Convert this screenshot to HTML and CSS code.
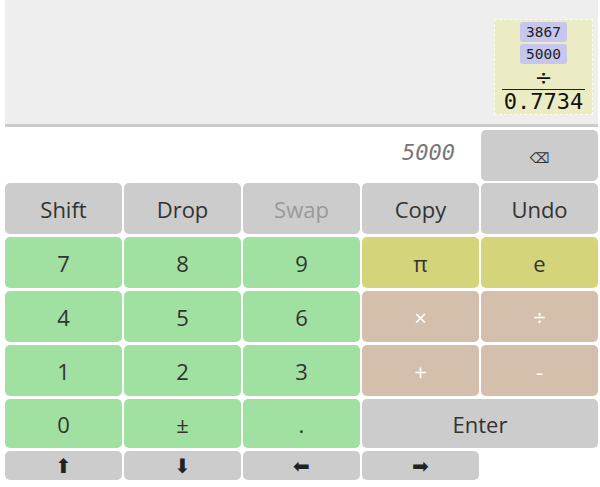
FILE: index.html
```html
<!DOCTYPE html>
<html lang="en">
<head>
    <meta charset="UTF-8">
    <meta name="viewport" content="width=device-width, initial-scale=1.0">
    <title>RPN Calculator</title>
    <link rel="stylesheet" href="styles.css">
</head>
<body>

    <!-- Stack -->
    <div class="stack-area">
        <div class="stack">
            <div class="chip">3867</div>
            <div class="chip">5000</div>
            <div class="op">÷</div>
            <div class="result">0.7734</div>
        </div>
    </div>

    <!-- Entry -->
    <div class="entry">
        <div class="display">5000</div>
        <button class="key gray bksp">⌫</button>
    </div>

    <!-- Keypad -->
    <div class="keys">
        <button class="key gray">Shift</button>
        <button class="key gray">Drop</button>
        <button class="key gray off">Swap</button>
        <button class="key gray">Copy</button>
        <button class="key gray">Undo</button>

        <button class="key num">7</button>
        <button class="key num">8</button>
        <button class="key num">9</button>
        <button class="key const">π</button>
        <button class="key const">e</button>

        <button class="key num">4</button>
        <button class="key num">5</button>
        <button class="key num">6</button>
        <button class="key oper">×</button>
        <button class="key oper">÷</button>

        <button class="key num">1</button>
        <button class="key num">2</button>
        <button class="key num">3</button>
        <button class="key oper">+</button>
        <button class="key oper">-</button>

        <button class="key num">0</button>
        <button class="key num">±</button>
        <button class="key num">.</button>
        <button class="key gray enter">Enter</button>

        <button class="key gray arrow">⬆</button>
        <button class="key gray arrow">⬇</button>
        <button class="key gray arrow">⬅</button>
        <button class="key gray arrow">➡</button>
    </div>

</body>
</html>
```

FILE: styles.css
```css
body { margin: 0; padding: 0 2px 0 5px; font-family: "Open Sans", "DejaVu Sans", sans-serif; background: white; }

/* Stack */
.stack-area { height: 124px; background: #eee; border-bottom: 3px solid #ccc; display: flex; justify-content: flex-end; align-items: flex-start; padding-right: 5px; }
.stack { margin-top: 19px; width: 99px; height: 96px; box-sizing: border-box; background: #ececc4; border: 1.5px dashed #fcfcf4; display: flex; flex-direction: column; align-items: center; padding-top: 2px; font-family: "DejaVu Sans Mono", monospace; }
.chip { background: #c6c6ee; color: #222; font-size: 14.5px; line-height: 20px; padding: 0 6px; border-radius: 3px; margin-bottom: 2px; }
.op { font-size: 21px; line-height: 18px; color: #111; margin-top: 3px; font-family: "DejaVu Sans", sans-serif; }
.result { font-size: 22px; line-height: 23px; color: #111; border-top: 1px solid #222; padding: 0 2px; margin-top: 2px; }

/* Entry */
.entry { display: grid; grid-template-columns: repeat(5, 1fr); gap: 2px; margin-top: 3px; height: 51px; }
.display { grid-column: span 4; text-align: right; padding-right: 24px; font-family: "DejaVu Sans Mono", monospace; font-style: italic; font-size: 22px; color: #777; line-height: 46px; }

/* Keys */
.keys { display: grid; grid-template-columns: repeat(5, 1fr); grid-template-rows: repeat(4, 51px) 49px 29px; column-gap: 2px; row-gap: 3px; margin-top: 2px; }
.key { border: none; border-radius: 5px; font-family: inherit; font-size: 22px; color: #333; padding: 0; margin: 0; }
.gray { background: #ccc; }
.off { color: #999; }
.num { background: #a0e0a0; }
.const { background: #d4d47a; }
.oper { background: #d4bfac; color: white; }
.enter { grid-column: span 2; }
.bksp { font-size: 14px; padding-top: 4px; }
.arrow { font-size: 20px; color: #222; }
```
